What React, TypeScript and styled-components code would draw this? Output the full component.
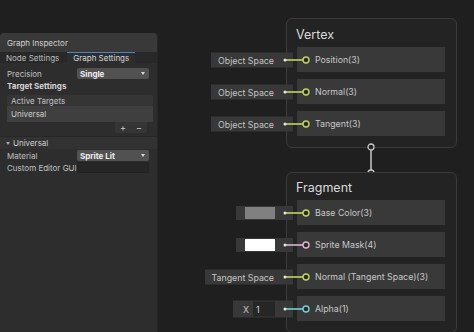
import React from 'react'
import styled, { createGlobalStyle } from 'styled-components'

const GlobalStyle = createGlobalStyle`
  html, body {
    margin: 0;
    padding: 0;
    background: #1f1f1f;
    font-family: Inter, "Noto Sans", sans-serif;
  }
  #root {
    width: 474px;
    height: 332px;
    overflow: hidden;
  }
`

const Screen = styled.div`
  display: flex;
  width: 474px;
  height: 332px;
  background: #1f1f1f;
`

/* ---------- inspector ---------- */

const Inspector = styled.div`
  width: 157px;
  margin-top: 33px;
  display: flex;
  flex-direction: column;
  background: #2d2d2d;
  border-right: 1px solid #262626;
  border-radius: 4px 4px 0 0;
  font-size: 8px;
  color: #c4c4c4;
`

const InspectorTitle = styled.div`
  height: 19px;
  display: flex;
  align-items: center;
  padding-left: 7px;
  background: #393939;
  border-radius: 4px 4px 0 0;
  font-size: 8px;
  color: #d2d2d2;
`

const Tabs = styled.div`
  display: flex;
  height: 11px;
  background: #282828;
`

const Tab = styled.div<{ $active?: boolean }>`
  display: flex;
  align-items: center;
  padding: 0 6px;
  margin-left: ${(p) => (p.$active ? '2px' : '0')};
  border-top: 1px solid ${(p) => (p.$active ? '#4a84c9' : 'transparent')};
  background: ${(p) => (p.$active ? '#2d2d2d' : 'transparent')};
  color: ${(p) => (p.$active ? '#d8d8d8' : '#bdbdbd')};
`

const Content = styled.div`
  display: flex;
  flex-direction: column;
  padding: 5px 4px 0 7px;
`

const FieldRow = styled.div`
  display: flex;
  align-items: center;
  height: 11px;
  margin-bottom: 1px;
`

const FieldLabel = styled.div`
  width: 70px;
  color: #c0c0c0;
`

const Dropdown = styled.div`
  flex: none;
  width: 72px;
  height: 11px;
  display: flex;
  align-items: center;
  justify-content: space-between;
  box-sizing: border-box;
  padding: 0 4px 0 3px;
  background: #515151;
  border-radius: 2px;
  font-weight: 700;
  color: #efefef;
  &::after {
    content: '';
    border-left: 2.5px solid transparent;
    border-right: 2.5px solid transparent;
    border-top: 3px solid #d8d8d8;
  }
`

const TextField = styled.div`
  width: 72px;
  height: 11px;
  box-sizing: border-box;
  background: #262626;
  border: 1px solid #222;
  border-radius: 2px;
`

const SectionTitle = styled.div`
  height: 12px;
  display: flex;
  align-items: center;
  font-weight: 700;
  color: #d6d6d6;
`

const TargetList = styled.div`
  display: flex;
  flex-direction: column;
  margin-top: 3px;
`

const ListHeader = styled.div`
  height: 11px;
  display: flex;
  align-items: center;
  padding-left: 4px;
  background: #353535;
  border-radius: 2px 2px 0 0;
`

const ListItem = styled.div`
  height: 16px;
  display: flex;
  align-items: center;
  padding-left: 4px;
  background: #3f3f3f;
  color: #cdcdcd;
`

const ListFooter = styled.div`
  align-self: flex-end;
  width: 32px;
  height: 11px;
  margin-right: 6px;
  display: flex;
  align-items: center;
  justify-content: space-around;
  background: #353535;
  border-radius: 0 0 2px 2px;
  font-size: 9px;
  color: #cfcfcf;
`

const Foldout = styled.div`
  height: 12px;
  margin: 3px -4px 1px -7px;
  display: flex;
  align-items: center;
  gap: 3px;
  padding-left: 6px;
  background: #323232;
  border-top: 1px solid #262626;
  color: #cfcfcf;
  &::before {
    content: '';
    border-left: 2.5px solid transparent;
    border-right: 2.5px solid transparent;
    border-top: 3.5px solid #a8a8a8;
  }
`

/* ---------- graph ---------- */

const Canvas = styled.div`
  position: relative;
  flex: 1;
`

const Node = styled.div<{ $x: number; $y: number }>`
  position: absolute;
  left: ${(p) => p.$x}px;
  top: ${(p) => p.$y}px;
  width: 169px;
  display: flex;
  flex-direction: column;
  background: #232323;
  border: 1px solid #3b3b3b;
  border-radius: 6px;
`

const NodeTitle = styled.div<{ $h: number }>`
  height: ${(p) => p.$h}px;
  display: flex;
  align-items: center;
  padding: 2px 0 0 9px;
  box-sizing: border-box;
  font-size: 12.5px;
  color: #dadada;
`

const NodeBody = styled.div`
  display: flex;
  flex-direction: column;
  gap: 7px;
  padding: 0 11px 11px 10px;
`

const Slot = styled.div`
  position: relative;
  height: 25px;
  display: flex;
  align-items: center;
  padding-left: 18px;
  background: #393939;
  font-size: 8.8px;
  color: #c8c8c8;
`

const Port = styled.svg`
  position: absolute;
  left: -14px;
  top: 50%;
  transform: translateY(-50%);
  overflow: visible;
  z-index: 2;
`

const Chip = styled.div<{ $h?: number }>`
  position: absolute;
  right: calc(100% + 4px);
  top: 50%;
  transform: translateY(-50%);
  height: ${(p) => p.$h ?? 15}px;
  display: flex;
  align-items: center;
  white-space: nowrap;
  padding: 0 19px 0 7px;
  background: #383838;
  font-size: 8.8px;
  color: #c4c4c4;
  z-index: 1;
`

const Swatch = styled.div<{ $color: string }>`
  width: 30px;
  height: 12px;
  margin-left: 2px;
  margin-right: -1px;
  background: ${(p) => p.$color};
`

const AxisLabel = styled.span`
  margin-left: 3px;
  margin-right: 4px;
`

const NumberField = styled.div`
  width: 22px;
  height: 15px;
  display: flex;
  align-items: center;
  padding-left: 3px;
  box-sizing: border-box;
  margin-right: -1px;
  background: #262626;
  color: #d0d0d0;
`

const Connector = styled.svg`
  position: absolute;
  left: 208px;
  top: 143px;
  overflow: visible;
`

type SlotProps = { label: string; color: string; children: React.ReactNode }

function GraphSlot({ label, color, children }: SlotProps) {
  return (
    <Slot>
      {children}
      <Port width="28" height="8" viewBox="0 0 28 8">
        <line x1="2" y1="4" x2="20" y2="4" stroke={color} strokeWidth="1.6" />
        <circle cx="2" cy="4" r="1.5" fill="#e6e6e6" />
        <circle cx="23" cy="4" r="3" fill="#2a2a2a" stroke={color} strokeWidth="1.4" />
      </Port>
      {label}
    </Slot>
  )
}

const yellow = '#c3d35f'

export default function App() {
  return (
    <Screen>
      <GlobalStyle />
      <Inspector>
        <InspectorTitle>Graph Inspector</InspectorTitle>
        <Tabs>
          <Tab>Node Settings</Tab>
          <Tab $active>Graph Settings</Tab>
        </Tabs>
        <Content>
          <FieldRow>
            <FieldLabel>Precision</FieldLabel>
            <Dropdown>Single</Dropdown>
          </FieldRow>
          <SectionTitle>Target Settings</SectionTitle>
          <TargetList>
            <ListHeader>Active Targets</ListHeader>
            <ListItem>Universal</ListItem>
            <ListFooter>
              <span>+</span>
              <span>−</span>
            </ListFooter>
          </TargetList>
          <Foldout>Universal</Foldout>
          <FieldRow>
            <FieldLabel>Material</FieldLabel>
            <Dropdown>Sprite Lit</Dropdown>
          </FieldRow>
          <FieldRow>
            <FieldLabel>Custom Editor GUI</FieldLabel>
            <TextField />
          </FieldRow>
        </Content>
      </Inspector>

      <Canvas>
        <Node $x={128} $y={18}>
          <NodeTitle $h={28}>Vertex</NodeTitle>
          <NodeBody>
            <GraphSlot label="Position(3)" color={yellow}>
              <Chip>Object Space</Chip>
            </GraphSlot>
            <GraphSlot label="Normal(3)" color={yellow}>
              <Chip>Object Space</Chip>
            </GraphSlot>
            <GraphSlot label="Tangent(3)" color={yellow}>
              <Chip>Object Space</Chip>
            </GraphSlot>
          </NodeBody>
        </Node>

        <Connector width="10" height="34" viewBox="0 0 10 34">
          <line x1="5" y1="4" x2="5" y2="30" stroke="#c9c9c9" strokeWidth="1.5" />
          <circle cx="5" cy="4" r="3" fill="#232323" stroke="#c9c9c9" strokeWidth="1.3" />
          <circle cx="5" cy="30" r="3" fill="#232323" stroke="#c9c9c9" strokeWidth="1.3" />
        </Connector>

        <Node $x={128} $y={172}>
          <NodeTitle $h={27}>Fragment</NodeTitle>
          <NodeBody>
            <GraphSlot label="Base Color(3)" color={yellow}>
              <Chip $h={14}>
                <Swatch $color="#808080" />
              </Chip>
            </GraphSlot>
            <GraphSlot label="Sprite Mask(4)" color="#dcb3d6">
              <Chip $h={14}>
                <Swatch $color="#ffffff" />
              </Chip>
            </GraphSlot>
            <GraphSlot label="Normal (Tangent Space)(3)" color={yellow}>
              <Chip>Tangent Space</Chip>
            </GraphSlot>
            <GraphSlot label="Alpha(1)" color="#78cfd2">
              <Chip $h={17}>
                <AxisLabel>X</AxisLabel>
                <NumberField>1</NumberField>
              </Chip>
            </GraphSlot>
          </NodeBody>
        </Node>
      </Canvas>
    </Screen>
  )
}
